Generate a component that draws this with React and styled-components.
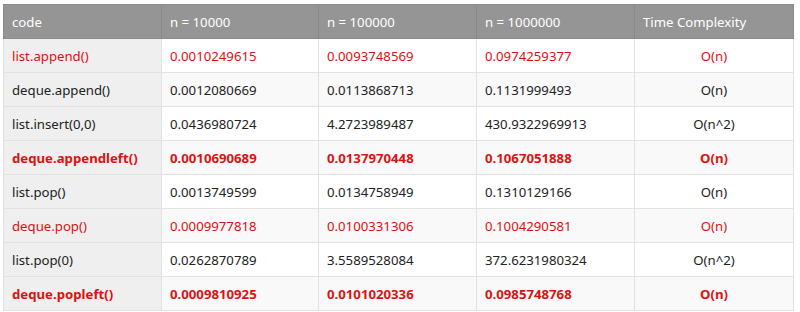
import React from 'react';
import styled, { createGlobalStyle } from 'styled-components';

const GlobalStyle = createGlobalStyle`
  body {
    margin: 0;
    background: #ffffff;
    font-family: "Noto Sans", "Noto Sans CJK KR", sans-serif;
  }
`;

const Table = styled.table`
  margin: 4px 0 0 3px;
  width: 790px;
  table-layout: fixed;
  border-collapse: collapse;
  font-size: 13.2px;
  color: #222222;
  border: 1px solid #e2e2e2;
`;

const HeadCell = styled.th`
  height: 33px;
  padding: 0 8px;
  background: #959595;
  color: #ffffff;
  font-weight: normal;
  text-align: left;
  border: 1px solid #8a8a8a;
`;

const Row = styled.tr`
  background: ${props => (props.striped ? '#f9f9f9' : '#ffffff')};
`;

const Cell = styled.td`
  height: 33px;
  padding: 0 8px;
  border: 1px solid #e2e2e2;
  color: ${props => (props.red ? '#dd1111' : '#222222')};
  font-weight: ${props => (props.bold ? 'bold' : 'normal')};
  text-align: ${props => (props.center ? 'center' : 'left')};
  white-space: nowrap;
`;

const CodeCell = styled(Cell)`
  background: #efefef;
`;

const rows = [
  { code: 'list.append()', a: '0.0010249615', b: '0.0093748569', c: '0.0974259377', o: 'O(n)', red: true },
  { code: 'deque.append()', a: '0.0012080669', b: '0.0113868713', c: '0.1131999493', o: 'O(n)' },
  { code: 'list.insert(0,0)', a: '0.0436980724', b: '4.2723989487', c: '430.9322969913', o: 'O(n^2)' },
  { code: 'deque.appendleft()', a: '0.0010690689', b: '0.0137970448', c: '0.1067051888', o: 'O(n)', red: true, bold: true },
  { code: 'list.pop()', a: '0.0013749599', b: '0.0134758949', c: '0.1310129166', o: 'O(n)' },
  { code: 'deque.pop()', a: '0.0009977818', b: '0.0100331306', c: '0.1004290581', o: 'O(n)', red: true },
  { code: 'list.pop(0)', a: '0.0262870789', b: '3.5589528084', c: '372.6231980324', o: 'O(n^2)' },
  { code: 'deque.popleft()', a: '0.0009810925', b: '0.0101020336', c: '0.0985748768', o: 'O(n)', red: true, bold: true },
];

export default function App() {
  return (
    <>
      <GlobalStyle />
      <Table>
        <colgroup>
          <col style={{ width: 158 }} />
          <col style={{ width: 157 }} />
          <col style={{ width: 158 }} />
          <col style={{ width: 158 }} />
          <col style={{ width: 159 }} />
        </colgroup>
        <thead>
          <tr>
            <HeadCell>code</HeadCell>
            <HeadCell>n = 10000</HeadCell>
            <HeadCell>n = 100000</HeadCell>
            <HeadCell>n = 1000000</HeadCell>
            <HeadCell>Time Complexity</HeadCell>
          </tr>
        </thead>
        <tbody>
          {rows.map((r, i) => (
            <Row key={r.code} striped={i % 2 === 1}>
              <CodeCell red={r.red} bold={r.bold}>{r.code}</CodeCell>
              <Cell red={r.red} bold={r.bold}>{r.a}</Cell>
              <Cell red={r.red} bold={r.bold}>{r.b}</Cell>
              <Cell red={r.red} bold={r.bold}>{r.c}</Cell>
              <Cell red={r.red} bold={r.bold} center>{r.o}</Cell>
            </Row>
          ))}
        </tbody>
      </Table>
    </>
  );
}
